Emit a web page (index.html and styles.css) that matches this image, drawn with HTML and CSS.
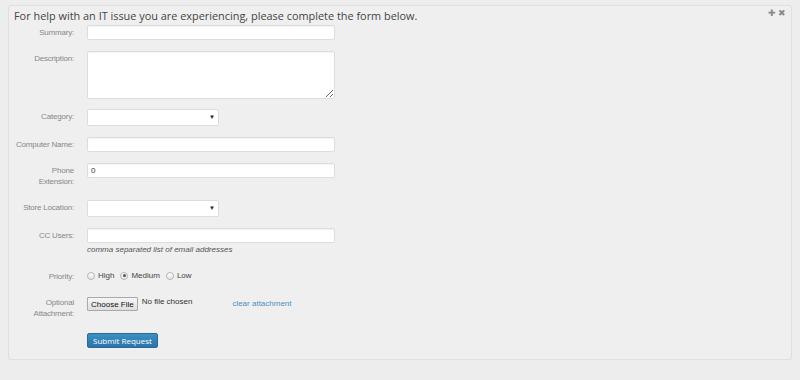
FILE: index.html
```html
<!DOCTYPE html>
<html lang="en">
<head>
  <meta charset="UTF-8">
  <title>IT Help Request</title>
  <link rel="stylesheet" href="styles.css">
</head>
<body>
  <div class="panel">
    <div class="panel-tools">
      <span class="tool">&#x271A;</span>
      <span class="tool">&#x2716;</span>
    </div>
    <h2 class="title">For help with an IT issue you are experiencing, please complete the form below.</h2>

    <form class="ticket-form">
      <div class="row">
        <label class="lbl">Summary:</label>
        <div class="ctl"><input type="text" class="txt"></div>
      </div>
      <div class="row row-desc">
        <label class="lbl">Description:</label>
        <div class="ctl"><textarea class="area"></textarea></div>
      </div>
      <div class="row">
        <label class="lbl">Category:</label>
        <div class="ctl"><span class="sel"><select></select></span></div>
      </div>
      <div class="row">
        <label class="lbl">Computer Name:</label>
        <div class="ctl"><input type="text" class="txt"></div>
      </div>
      <div class="row row-phone">
        <label class="lbl">Phone<br>Extension:</label>
        <div class="ctl"><input type="text" class="txt" value="0"></div>
      </div>
      <div class="row">
        <label class="lbl">Store Location:</label>
        <div class="ctl"><span class="sel"><select></select></span></div>
      </div>
      <div class="row row-cc">
        <label class="lbl">CC Users:</label>
        <div class="ctl">
          <input type="text" class="txt">
          <div class="hint">comma separated list of email addresses</div>
        </div>
      </div>
      <div class="row row-prio">
        <label class="lbl">Priority:</label>
        <div class="ctl radios">
          <label class="opt"><input type="radio" name="prio"> High</label>
          <label class="opt"><input type="radio" name="prio" checked> Medium</label>
          <label class="opt"><input type="radio" name="prio"> Low</label>
        </div>
      </div>
      <div class="row row-file">
        <label class="lbl">Optional<br>Attachment:</label>
        <div class="ctl file">
          <span class="file-btn">Choose File</span>
          <span class="file-name">No file chosen</span>
          <a href="#" class="clear">clear attachment</a>
        </div>
      </div>
      <div class="row">
        <span class="lbl"></span>
        <div class="ctl"><button type="submit" class="submit">Submit Request</button></div>
      </div>
    </form>
  </div>
</body>
</html>
```

FILE: styles.css
```css
body {
  margin: 0;
  background-color: #ededed;
  font-family: "Liberation Sans", Arial, sans-serif;
  color: #333;
}
.panel {
  position: relative;
  margin: 5px 8px 0 8px;
  background-color: #efefef;
  border: 1px solid #e0e0e0;
  border-radius: 3px;
  box-shadow: 0 1px 1px rgba(0, 0, 0, 0.04);
  padding: 0 0 11px 0;
}
.panel-tools {
  position: absolute;
  top: 2px;
  right: 5px;
  display: flex;
  gap: 2px;
}
.tool {
  font-size: 9px;
  color: #8a8a8a;
}
.title {
  margin: 0 0 0 5px;
  font-family: "Open Sans", sans-serif;
  font-weight: normal;
  font-size: 10.9px;
  line-height: 19px;
  color: #444;
}
.row {
  display: flex;
  gap: 13px;
  margin-bottom: 11px;
}
.lbl {
  width: 65px;
  flex: none;
  text-align: right;
  font-size: 8px;
  letter-spacing: -0.2px;
  line-height: 11px;
  padding-top: 2px;
  color: #888;
}
.ctl {
  font-size: 8px;
}
.txt, .area {
  display: block;
  box-sizing: border-box;
  width: 248px;
  height: 15px;
  margin: 0;
  padding: 1px 3px;
  border: 1px solid #ddd;
  border-radius: 2px;
  background: #fff;
  box-shadow: inset 0 1px 1px rgba(0, 0, 0, 0.05);
  font-family: inherit;
  font-size: 8px;
  color: #333;
}
.area {
  height: 48px;
  resize: vertical;
}
.row-desc {
  margin-bottom: 10px;
}
.row-phone {
  margin-bottom: 13px;
}
.sel {
  position: relative;
  display: block;
}
.sel select {
  display: block;
  width: 132px;
  height: 17px;
  margin: 0;
  border: 1px solid #ddd;
  border-radius: 2px;
  background: #fff;
  appearance: none;
  -webkit-appearance: none;
}
.sel::after {
  content: "\25BC";
  position: absolute;
  right: 4px;
  top: 5px;
  font-size: 6px;
  color: #222;
}
.hint {
  margin-top: 1px;
  font-style: italic;
  font-size: 8px;
  line-height: 11px;
  color: #555;
}
.row-cc {
  margin-bottom: 13px;
}
.radios {
  display: flex;
  gap: 6px;
  align-items: center;
  height: 13px;
  padding-top: 1px;
}
.opt {
  display: flex;
  align-items: center;
  gap: 3px;
  color: #444;
  font-size: 8px;
}
.opt input {
  appearance: none;
  -webkit-appearance: none;
  width: 8px;
  height: 8px;
  margin: 0;
  border: 1px solid #b5b5b5;
  border-radius: 50%;
  background: linear-gradient(#fff, #e4e4e4);
  position: relative;
}
.opt input:checked::after {
  content: "";
  position: absolute;
  left: 1.5px;
  top: 1.5px;
  width: 3px;
  height: 3px;
  border-radius: 50%;
  background: #555;
}
.row-prio {
  margin-bottom: 15px;
}
.row-prio .lbl {
  padding-top: 3px;
}
.file {
  display: flex;
  align-items: flex-start;
}
.file-btn {
  box-sizing: border-box;
  height: 14px;
  padding: 1px 3px;
  border: 1px solid #a9a9a9;
  border-radius: 1px;
  background: linear-gradient(#f6f6f6, #dedede);
  font-size: 8px;
  line-height: 11px;
  color: #111;
}
.file-name {
  margin-left: 4px;
  font-size: 8px;
  color: #333;
}
.clear {
  margin-left: 40px;
  margin-top: 2px;
  font-size: 8px;
  color: #4a90c2;
  text-decoration: none;
}
.row-file {
  margin-bottom: 14px;
}
.row-file .lbl {
  padding-top: 0;
}
.submit {
  display: block;
  height: 15px;
  padding: 0 5px;
  border: 1px solid #2a6a9a;
  border-radius: 2px;
  background: linear-gradient(#3d8fc2, #2b74aa);
  color: #fff;
  font-family: "Open Sans", sans-serif;
  font-size: 8px;
  line-height: 13px;
}
.row:last-child {
  margin-bottom: 0;
}
```
